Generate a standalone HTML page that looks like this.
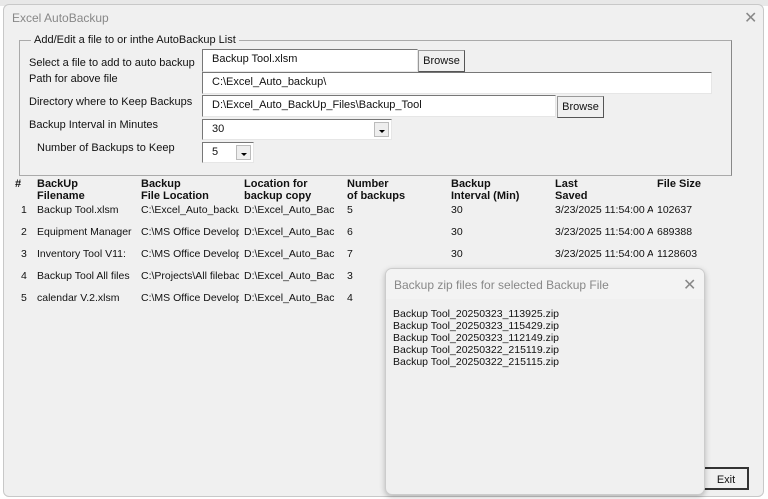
<!DOCTYPE html>
<html><head><style>
body{margin:0;width:768px;height:499px;overflow:hidden;background:#fff;font-family:"Liberation Sans",sans-serif;font-size:11px;color:#111;position:relative}
.a{position:absolute;white-space:nowrap}
.in{position:absolute;background:#fff;border-top:1px solid #777;border-left:1px solid #777;border-bottom:1px solid #e6e6e6;border-right:1px solid #e6e6e6;box-sizing:border-box;padding:3px 0 0 9px;font-size:11px}
.btn{position:absolute;background:#f0f0f0;border:1px solid #999;border-right-color:#555;border-bottom-color:#555;box-sizing:border-box;text-align:center;padding-top:4px;font-size:11px}
.dd{position:absolute;width:15px;top:2px;bottom:2px;right:2px;background:#eee;border:1px solid #bbb;box-sizing:border-box}
.dd:after{content:"";position:absolute;left:4px;top:7px;border-left:3px solid transparent;border-right:3px solid transparent;border-top:3px solid #000}
.h{font-weight:bold;line-height:12px;font-size:11px}
.r{font-size:10.5px;line-height:22px;overflow:hidden}
</style></head><body>
<div class="a" style="left:0;top:0;width:768px;height:6px;background:#e8e8e8"></div>
<div class="a" style="left:3px;top:4px;width:759px;height:491px;background:#f0f0f0;border:1px solid #c8c8c8;border-radius:6px"></div>
<div class="a" style="left:12px;top:11px;font-size:12px;color:#888">Excel AutoBackup</div>
<div class="a" style="left:744px;top:8px;font-size:16px;color:#888">✕</div>
<div class="a" style="left:19px;top:40px;width:711px;height:134px;border:1px solid #aaa;border-right-color:#888"></div>
<div class="a" style="left:31px;top:34px;background:#f0f0f0;padding:0 3px">Add/Edit a file to or inthe AutoBackup List</div>
<div class="a" style="left:29px;top:57px">Select a file to add to auto backup</div>
<div class="a" style="left:29px;top:73px">Path for above file</div>
<div class="a" style="left:29px;top:96px">Directory where to Keep Backups</div>
<div class="a" style="left:29px;top:119px">Backup Interval in Minutes</div>
<div class="a" style="left:37px;top:142px">Number of Backups to Keep</div>
<div class="in" style="left:202px;top:49px;width:216px;height:23px">Backup Tool.xlsm</div>
<div class="btn" style="left:418px;top:50px;width:47px;height:22px">Browse</div>
<div class="in" style="left:202px;top:72px;width:510px;height:22px">C:\Excel_Auto_backup\</div>
<div class="in" style="left:202px;top:95px;width:354px;height:22px">D:\Excel_Auto_BackUp_Files\Backup_Tool</div>
<div class="btn" style="left:557px;top:96px;width:47px;height:22px">Browse</div>
<div class="in" style="left:202px;top:119px;width:190px;height:21px">30<div class="dd"></div></div>
<div class="in" style="left:202px;top:142px;width:52px;height:21px">5<div class="dd"></div></div>
<div class="a h" style="left:15px;top:178px">#</div>
<div class="a h" style="left:37px;top:178px">BackUp<br>Filename</div>
<div class="a h" style="left:141px;top:178px">Backup<br>File Location</div>
<div class="a h" style="left:244px;top:178px">Location for<br>backup copy</div>
<div class="a h" style="left:347px;top:178px">Number<br>of backups</div>
<div class="a h" style="left:451px;top:178px">Backup<br>Interval (Min)</div>
<div class="a h" style="left:555px;top:178px">Last<br>Saved</div>
<div class="a h" style="left:657px;top:178px">File Size</div>
<div class="a r" style="left:21px;top:199px">1<br>2<br>3<br>4<br>5</div>
<div class="a r" style="left:37px;top:199px;width:101px">Backup Tool.xlsm<br>Equipment Manager<br>Inventory Tool V11:<br>Backup Tool All files<br>calendar V.2.xlsm</div>
<div class="a r" style="left:141px;top:199px;width:98px">C:\Excel_Auto_backup<br>C:\MS Office Develop<br>C:\MS Office Develop<br>C:\Projects\All filebackup<br>C:\MS Office Develop</div>
<div class="a r" style="left:244px;top:199px;width:90px">D:\Excel_Auto_Backup<br>D:\Excel_Auto_Backup<br>D:\Excel_Auto_Backup<br>D:\Excel_Auto_Backup<br>D:\Excel_Auto_Backup</div>
<div class="a r" style="left:347px;top:199px">5<br>6<br>7<br>3<br>4</div>
<div class="a r" style="left:451px;top:199px">30<br>30<br>30</div>
<div class="a r" style="left:555px;top:199px;width:98px">3/23/2025 11:54:00 AM<br>3/23/2025 11:54:00 AM<br>3/23/2025 11:54:00 AM</div>
<div class="a r" style="left:657px;top:199px">102637<br>689388<br>1128603</div>
<div class="btn" style="left:703px;top:467px;width:46px;height:23px;border:2px solid #333;padding-top:5px">Exit</div>
<div class="a" style="left:385px;top:268px;width:318px;height:225px;background:#f0f0f0;border:1px solid #ccc;border-radius:7px;box-shadow:0 2px 6px rgba(0,0,0,.25);overflow:hidden">
<div class="a" style="left:0;top:0;width:318px;height:30px;background:#f3f3f3"></div>
<div class="a" style="left:8px;top:9px;font-size:12px;color:#888">Backup zip files for selected Backup File</div>
<div class="a" style="left:297px;top:6px;font-size:16px;color:#888">✕</div>
<div class="a" style="left:7px;top:39px;line-height:12px;font-size:10.5px">Backup Tool_20250323_113925.zip<br>Backup Tool_20250323_115429.zip<br>Backup Tool_20250323_112149.zip<br>Backup Tool_20250322_215119.zip<br>Backup Tool_20250322_215115.zip</div>
</div>
</body></html>
